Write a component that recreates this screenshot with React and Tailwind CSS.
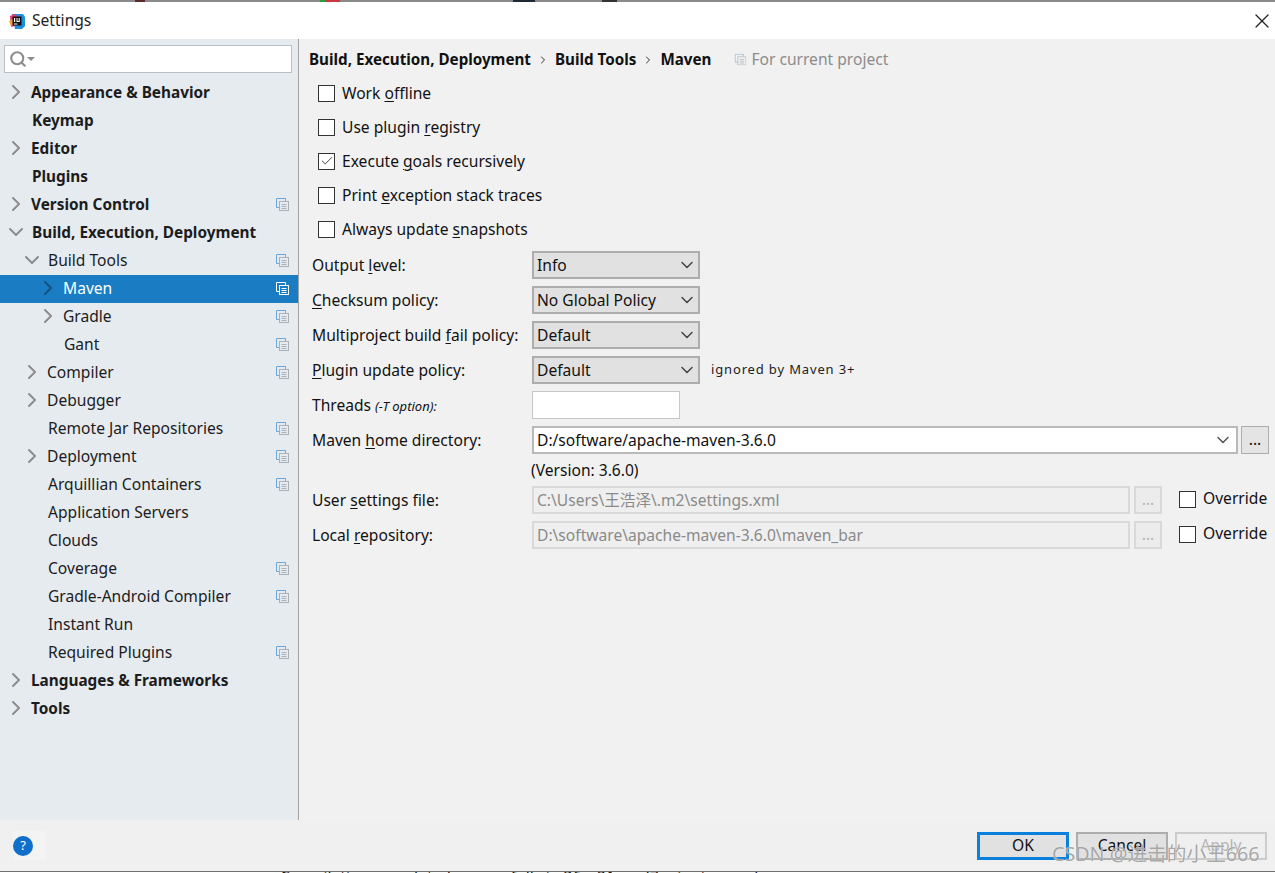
import React from "react";
import { ChevronRight, ChevronDown, Search, Check, X } from "lucide-react";

const font = "font-['Noto_Sans','Open_Sans',sans-serif]";

const tree = [
  { label: "Appearance & Behavior", level: 0, arrow: "right" },
  { label: "Keymap", level: 0 },
  { label: "Editor", level: 0, arrow: "right" },
  { label: "Plugins", level: 0 },
  { label: "Version Control", level: 0, arrow: "right", project: true },
  { label: "Build, Execution, Deployment", level: 0, arrow: "down" },
  { label: "Build Tools", level: 1, arrow: "down", project: true },
  { label: "Maven", level: 2, arrow: "right", project: true, selected: true },
  { label: "Gradle", level: 2, arrow: "right", project: true },
  { label: "Gant", level: 2, project: true },
  { label: "Compiler", level: 1, arrow: "right", project: true },
  { label: "Debugger", level: 1, arrow: "right" },
  { label: "Remote Jar Repositories", level: 1, project: true },
  { label: "Deployment", level: 1, arrow: "right", project: true },
  { label: "Arquillian Containers", level: 1, project: true },
  { label: "Application Servers", level: 1 },
  { label: "Clouds", level: 1 },
  { label: "Coverage", level: 1, project: true },
  { label: "Gradle-Android Compiler", level: 1, project: true },
  { label: "Instant Run", level: 1 },
  { label: "Required Plugins", level: 1, project: true },
  { label: "Languages & Frameworks", level: 0, arrow: "right" },
  { label: "Tools", level: 0, arrow: "right" },
];

const indent = ["pl-[10px]", "pl-[26px]", "pl-[42px]"];

function ProjectIcon({ light, className }) {
  const blue = light ? "#ffffff" : "#6aa7d8";
  const grey = light ? "#ffffff" : "#a9b0b6";
  return (
    <svg width="13" height="13" viewBox="0 0 13 13" fill="none" className={className}>
      <path d="M3.5 9.5H.5V.5h9v3" stroke={blue} />
      <rect x="3.5" y="3.5" width="9" height="9" stroke={grey} />
      <path d="M5.5 6.5h5M5.5 8.5h5M5.5 10.5h5" stroke={grey} />
    </svg>
  );
}

function TreeRow({ item }) {
  const Arrow = item.arrow === "down" ? ChevronDown : ChevronRight;
  return (
    <div className={`h-7 flex items-center pr-[9px] ${indent[item.level]} ${item.selected ? "bg-[#1a7dc4] text-white" : "text-[#1c1c1c]"}`}>
      <div className="w-[21px] h-6 -mt-[2px] shrink-0 flex">
        {item.arrow && (
          <Arrow size={24} strokeWidth={2} className={`shrink-0 -ml-[6px] ${item.selected ? "text-[#17507f]" : "text-[#8c8c8c]"}`} />
        )}
      </div>
      <span className={`flex-1 ${item.level === 0 ? "font-bold text-[15.35px]" : ""} ${item.arrow === "right" ? "" : "pl-[1px]"}`}>{item.label}</span>
      {item.project && <ProjectIcon light={item.selected} className="-mt-[2px]" />}
    </div>
  );
}

function Checkbox({ checked }) {
  return (
    <div className="w-[17px] h-[17px] shrink-0 border border-[#333333] bg-white flex items-center justify-center">
      {checked && <Check size={14} strokeWidth={1.7} className="text-[#444444]" />}
    </div>
  );
}

function Mnemonic({ children }) {
  return <span className="underline underline-offset-2 decoration-1">{children}</span>;
}

function CheckRow({ checked, children }) {
  return (
    <div className="h-[34px] flex items-center pl-[6px] gap-[7px]">
      <Checkbox checked={checked} />
      <span className="mt-[2px]">{children}</span>
    </div>
  );
}

function SelectBox({ value }) {
  return (
    <div className="w-[168px] h-7 border-2 border-[#adadad] bg-[#e1e1e1] flex items-center justify-between pl-[3px] pr-[1px]">
      <span className="mt-[2px]">{value}</span>
      <ChevronDown size={20} strokeWidth={1.8} className="text-[#444444]" />
    </div>
  );
}

function FormRow({ label, children }) {
  return (
    <div className="h-7 mb-[7px] flex items-center">
      <div className="w-[220px] mt-[2px] shrink-0">{label}</div>
      {children}
    </div>
  );
}

function DisabledPath({ value }) {
  return (
    <>
      <div className="w-[598px] h-7 pt-[2px] border-2 border-[#d9d9d9] bg-[#efefef] text-[#8a8a8a] flex items-center pl-[3px] font-['Noto_Sans','Noto_Sans_CJK_SC',sans-serif]">
        {value}
      </div>
      <div className="ml-[4px] w-7 h-7 border-2 border-[#d9d9d9] bg-[#ececec] text-[#b5b5b5] flex items-center justify-center">...</div>
      <div className="ml-[17px] flex items-center gap-[7px]">
        <Checkbox />
        <span className="-mt-[2px]">Override</span>
      </div>
    </>
  );
}

function FooterButton({ className, children }) {
  return <div className={`w-[92px] h-7 flex items-center justify-center ${className}`}>{children}</div>;
}

export default function App() {
  return (
    <div className={`relative w-[1275px] h-[873px] overflow-hidden flex flex-col bg-white text-[15.6px] text-[#111111] ${font}`}>
      {/* window behind the dialog */}
      <div className="h-[2px] shrink-0 bg-[#8a8a8a] flex">
        <div className="ml-[135px] w-[10px] bg-[#5b2a2a]" />
        <div className="ml-[175px] w-[5px] bg-[#2a9d3a]" />
        <div className="w-[15px] bg-[#c8383c]" />
        <div className="ml-[173px] w-[22px] bg-[#1e2a33]" />
        <div className="ml-[67px] w-[15px] bg-[#333333]" />
      </div>

      {/* title bar */}
      <div className="h-[37px] shrink-0 bg-white flex items-center pl-[9px] pr-[1px]">
        <svg width="16" height="16" viewBox="0 0 16 16" className="mr-[7px]">
          <path d="M3 1h11l2 3v9l-3 3H6z" fill="#1d8fe0" />
          <path d="M1 3l5-2 3 3-3 9-4 1z" fill="#f0386b" />
          <path d="M0 8l4-2v6l-2 1z" fill="#f79a2b" />
          <rect x="3.5" y="3.5" width="9" height="9" fill="#111111" />
          <path d="M5 5h1.2v4H5zM7.5 5h1v3h1.2V5h1v4H7.5z" fill="#ffffff" />
          <rect x="5" y="10.5" width="3.5" height="1" fill="#ffffff" />
        </svg>
        <span className="flex-1 text-[#222222]">Settings</span>
        <X size={24} strokeWidth={1.2} className="text-[#222222]" />
      </div>

      <div className="flex-1 min-h-0 flex">
        {/* sidebar */}
        <div className="w-[299px] shrink-0 bg-[#e6ebf0] border-r border-[#a3a3a3] pt-[6px]">
          <div className="mx-[4px] h-[28px] border border-[#b9bfc4] bg-white flex items-center pl-[4px] mb-[6px] w-[288px]">
            <Search size={18} strokeWidth={2.8} className="text-[#8c8c8c]" />
            <div className="w-0 h-0 border-x-[4px] border-x-transparent border-t-[4px] border-t-[#8c8c8c]" />
          </div>
          {tree.map((item) => (
            <TreeRow key={item.label} item={item} />
          ))}
        </div>

        {/* Maven page */}
        <div className="flex-1 bg-[#f1f1f1] pl-[13px]">
          <div className="h-[37px] pt-[4px] flex items-center -ml-[3px] font-bold text-[15.2px]">
            <span>Build, Execution, Deployment</span>
            <ChevronRight size={12} strokeWidth={1.7} className="mx-[6px]" />
            <span>Build Tools</span>
            <ChevronRight size={12} strokeWidth={1.7} className="mx-[6px]" />
            <span>Maven</span>
            <ProjectIcon className="ml-[23px] mr-[4px] scale-90 opacity-70" />
            <span className="font-normal text-[15.6px] text-[#8c8c8c]">For current project</span>
          </div>

          <CheckRow>Work <Mnemonic>o</Mnemonic>ffline</CheckRow>
          <CheckRow>Use plugin <Mnemonic>r</Mnemonic>egistry</CheckRow>
          <CheckRow checked>Execute <Mnemonic>g</Mnemonic>oals recursively</CheckRow>
          <CheckRow>Print <Mnemonic>e</Mnemonic>xception stack traces</CheckRow>
          <CheckRow>Always update <Mnemonic>s</Mnemonic>napshots</CheckRow>

          <div className="mt-[5px]">
            <FormRow label={<>Output <Mnemonic>l</Mnemonic>evel:</>}>
              <SelectBox value="Info" />
            </FormRow>
            <FormRow label={<><Mnemonic>C</Mnemonic>hecksum policy:</>}>
              <SelectBox value="No Global Policy" />
            </FormRow>
            <FormRow label={<>Multiproject build <Mnemonic>f</Mnemonic>ail policy:</>}>
              <SelectBox value="Default" />
            </FormRow>
            <FormRow label={<><Mnemonic>P</Mnemonic>lugin update policy:</>}>
              <SelectBox value="Default" />
              <span className="ml-[11px] text-[13px] tracking-[0.85px] text-[#222222]">ignored by Maven 3+</span>
            </FormRow>
            <FormRow label={<>Threads <span className="text-[13px] italic">(-T option):</span></>}>
              <div className="w-[148px] h-7 border border-[#c8c8c8] bg-white" />
            </FormRow>
            <FormRow label={<>Maven <Mnemonic>h</Mnemonic>ome directory:</>}>
              <div className="w-[706px] h-7 border-2 border-[#b9b9b9] bg-white flex items-center justify-between pl-[3px] pr-[3px]">
                <span className="mt-[2px]">D:/software/apache-maven-3.6.0</span>
                <ChevronDown size={20} strokeWidth={1.8} className="text-[#555555]" />
              </div>
              <div className="ml-[3px] w-7 h-7 border border-[#adadad] bg-[#e4e4e4] flex items-center justify-center">...</div>
            </FormRow>
            <div className="h-[32px] -mt-[7px] pt-[2px] pl-[219px] flex items-center">(Version: 3.6.0)</div>
            <FormRow label={<>User <Mnemonic>s</Mnemonic>ettings file:</>}>
              <DisabledPath value="C:\Users\王浩泽\.m2\settings.xml" />
            </FormRow>
            <FormRow label={<>Local <Mnemonic>r</Mnemonic>epository:</>}>
              <DisabledPath value="D:\software\apache-maven-3.6.0\maven_bar" />
            </FormRow>
          </div>
        </div>
      </div>

      {/* footer */}
      <div className="h-[51px] shrink-0 bg-[#f0f0f0] flex items-center pl-[13px] pr-[8px]">
        <div className="w-[33px] h-[29px] bg-[#f3f3f3] flex items-center">
          <div className="w-5 h-5 rounded-full bg-[#0f6fcb] text-white text-[13px] flex items-center justify-center">?</div>
        </div>
        <div className="flex-1" />
        <div className="flex gap-[7px]">
          <FooterButton className="border-[3px] border-[#0a7fdc] bg-[#e1e1e1]">OK</FooterButton>
          <FooterButton className="border-2 border-[#adadad] bg-[#e1e1e1]">Cancel</FooterButton>
          <FooterButton className="border-2 border-[#cccccc] bg-[#efefef] text-[#b5b5b5]">Apply</FooterButton>
        </div>
      </div>
      <div className="h-[1px] shrink-0 bg-[#6f6f6f]" />

      {/* editor status text showing under the dialog */}
      <div className="h-[1px] shrink-0 overflow-hidden bg-white pl-[280px] leading-[11px] whitespace-nowrap">
        Compilation completed successfully in 36 s 21 ms (7 minutes ago)
      </div>

      {/* watermark */}
      <span className="absolute left-[1052px] top-[842px] text-[19.7px] leading-[24px] text-[#8f8f8f]/80 [text-shadow:0_0_1px_#ffffff] font-['Noto_Sans','Noto_Sans_CJK_SC',sans-serif]">
        CSDN @进击的小王666
      </span>
    </div>
  );
}
